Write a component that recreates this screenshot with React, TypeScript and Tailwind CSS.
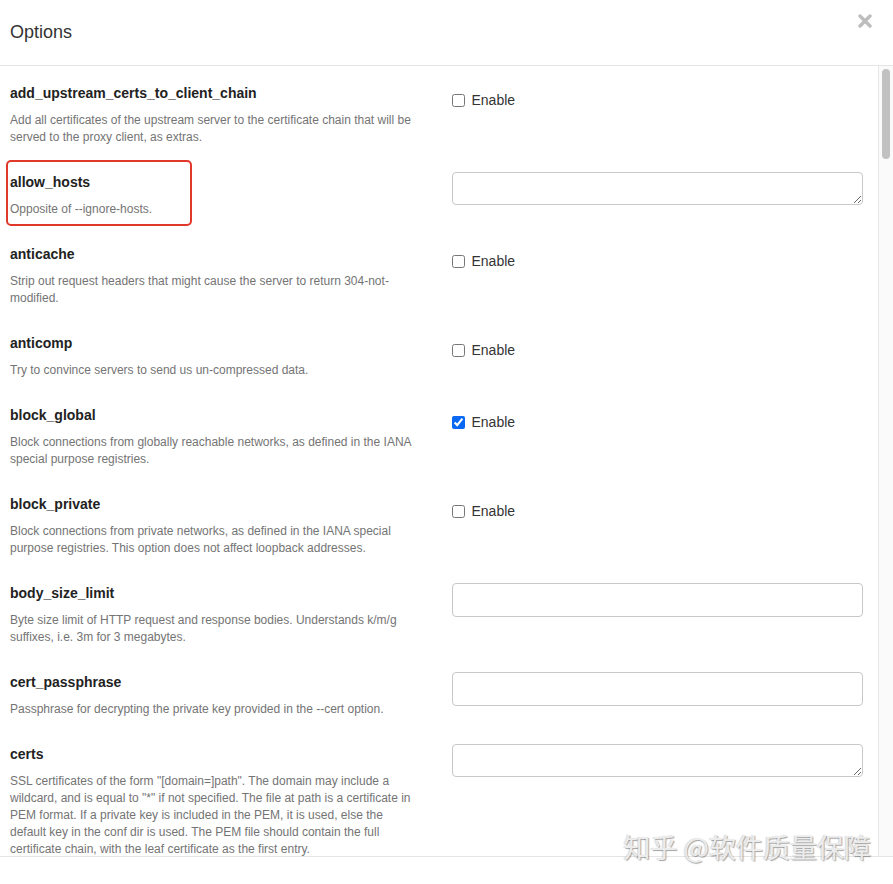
import React from "react";

type Control = "check" | "checked" | "textarea" | "input";

type Option = {
  name: string;
  help: string;
  control: Control;
  marked?: boolean;
};

const options: Option[] = [
  {
    name: "add_upstream_certs_to_client_chain",
    help: "Add all certificates of the upstream server to the certificate chain that will be served to the proxy client, as extras.",
    control: "check",
  },
  { name: "allow_hosts", help: "Opposite of --ignore-hosts.", control: "textarea", marked: true },
  {
    name: "anticache",
    help: "Strip out request headers that might cause the server to return 304-not-modified.",
    control: "check",
  },
  { name: "anticomp", help: "Try to convince servers to send us un-compressed data.", control: "check" },
  {
    name: "block_global",
    help: "Block connections from globally reachable networks, as defined in the IANA special purpose registries.",
    control: "checked",
  },
  {
    name: "block_private",
    help: "Block connections from private networks, as defined in the IANA special purpose registries. This option does not affect loopback addresses.",
    control: "check",
  },
  {
    name: "body_size_limit",
    help: "Byte size limit of HTTP request and response bodies. Understands k/m/g suffixes, i.e. 3m for 3 megabytes.",
    control: "input",
  },
  {
    name: "cert_passphrase",
    help: "Passphrase for decrypting the private key provided in the --cert option.",
    control: "input",
  },
  {
    name: "certs",
    help: 'SSL certificates of the form "[domain=]path". The domain may include a wildcard, and is equal to "*" if not specified. The file at path is a certificate in PEM format. If a private key is included in the PEM, it is used, else the default key in the conf dir is used. The PEM file should contain the full certificate chain, with the leaf certificate as the first entry.',
    control: "textarea",
  },
];

function OptionControl({ control }: { control: Control }) {
  if (control === "textarea") {
    return (
      <textarea
        className="block h-[33px] w-full rounded-[4px] border border-[#c8c8c8] bg-white outline-none"
        defaultValue=""
      />
    );
  }
  if (control === "input") {
    return (
      <input
        type="text"
        className="block h-[34px] w-full rounded-[4px] border border-[#c8c8c8] bg-white outline-none"
        defaultValue=""
      />
    );
  }
  return (
    <label className="flex h-5 items-center gap-[7px] pt-[14px] text-[14px] leading-5 text-[#333]">
      <input
        type="checkbox"
        defaultChecked={control === "checked"}
        className="m-0 h-[13px] w-[13px] accent-[#0a68f5]"
      />
      <span>Enable</span>
    </label>
  );
}

function OptionRow({ option }: { option: Option }) {
  return (
    <div className="grid grid-cols-2 gap-x-[30px] pb-[26px]">
      <div className="relative">
        {option.marked && (
          <div className="absolute -left-[4px] -top-[12px] h-[66px] w-[186px] rounded-[5px] border-2 border-[#e0392a]" />
        )}
        <h4 className="h-5 text-[14px] font-bold leading-5 text-[#222]">{option.name}</h4>
        <p className="mt-[9px] text-[12px] leading-[17px] text-[#747474]">{option.help}</p>
      </div>
      <div>
        <OptionControl control={option.control} />
      </div>
    </div>
  );
}

export default function App() {
  return (
    <div
      className="relative flex h-[884px] w-full flex-col overflow-hidden bg-white"
      style={{ fontFamily: '"Liberation Sans", Arial, Helvetica, sans-serif' }}
    >
      <div className="flex h-[66px] shrink-0 items-start justify-between border-b border-[#e5e5e5] pl-[10px] pr-[21px]">
        <h3 className="pt-[20px] text-[18px] leading-6 text-[#333]">Options</h3>
        <button className="mt-[14px] text-[#bdbdbd]" aria-label="close">
          <svg width="14" height="14" viewBox="0 0 14 14">
            <path d="M2 2 L12 12 M12 2 L2 12" stroke="currentColor" strokeWidth="3.4" strokeLinecap="round" />
          </svg>
        </button>
      </div>

      <div className="flex h-[790px] shrink-0">
        <div className="flex-1 overflow-hidden pl-[10px] pr-[15px] pt-[17px]">
          {options.map((option) => (
            <OptionRow key={option.name} option={option} />
          ))}
        </div>
        <div className="w-[15px] shrink-0 border-l border-[#e8e8e8] bg-[#fafafa]">
          <div className="ml-[3px] mt-[3px] h-[90px] w-[8px] rounded-full bg-[#c1c1c1]" />
        </div>
      </div>

      <div className="h-[27px] shrink-0 border-t border-[#e5e5e5] bg-white" />

      <div
        className="absolute bottom-[20px] right-[22px] text-[27px] leading-[34px] text-[#ececec] [text-shadow:1px_1px_1px_rgba(0,0,0,0.35),-1px_0_1px_rgba(0,0,0,0.15)]"
        style={{ fontFamily: '"Noto Sans CJK SC", sans-serif' }}
      >
        知乎 @软件质量保障
      </div>
    </div>
  );
}
